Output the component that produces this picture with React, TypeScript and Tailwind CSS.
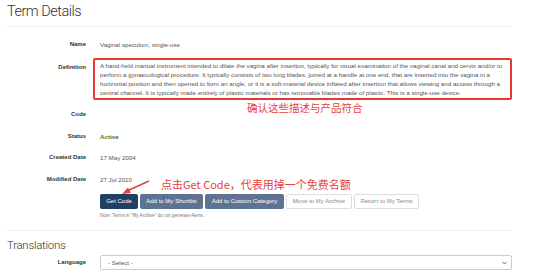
import type { ReactNode } from 'react';

interface RowProps {
  label: string;
  children?: ReactNode;
  className?: string;
}

function Row({ label, children, className = '' }: RowProps) {
  return (
    <div className={`flex items-center ${className}`}>
      <div className="w-[79px] shrink-0 text-right font-bold text-[6px] text-[#333]">{label}</div>
      <div className="ml-[14px] flex-1 text-[6.2px] text-[#555]">{children}</div>
    </div>
  );
}

const cjk = { fontFamily: '"Noto Sans CJK SC", "Liberation Sans", sans-serif' };
const heading = { fontFamily: 'Roboto, "Liberation Sans", sans-serif' };

export default function App() {
  return (
    <div
      className="relative w-[554px] h-[273px] overflow-hidden bg-white"
      style={{ fontFamily: '"Liberation Sans", Arial, sans-serif' }}
    >
      <div className="w-[512px] pl-[7px]">
        <div className="h-[27px] border-b border-[#eeeeee] pt-[2px]">
          <h1 className="text-[14.5px] leading-[20px] font-light tracking-[-0.5px] text-[#333]" style={heading}>
            Term Details
          </h1>
        </div>

        <Row label="Name" className="h-[21px] mt-[7px]">
          Vaginal speculum, single-use
        </Row>

        <div className="flex items-start mt-[3px]">
          <div className="w-[79px] shrink-0 text-right font-bold text-[6px] text-[#333] mt-[5px]">Definition</div>
          <div className="ml-[7px] flex-1 border-2 border-[#e53935] rounded-[2px] pl-[5px] pr-[4px] py-[1px] text-[6.2px] leading-[9px] text-[#555]">
            A hand-held manual instrument intended to dilate the vagina after insertion, typically for visual examination of the vaginal canal and cervix and/or to perform a gynaecological procedure. It typically consists of two long blades, joined at a handle at one end, that are inserted into the vagina in a horizontal position and then opened to form an angle, or it is a soft-material device inflated after insertion that allows viewing and access through a central channel. It is typically made entirely of plastic materials or has removable blades made of plastic. This is a single-use device.
          </div>
        </div>

        <Row label="Code" className="h-[21px] mt-[4px]" />
        <Row label="Status" className="h-[21px] mt-[1px]">
          <span className="text-[#3c763d] font-bold">Active</span>
        </Row>
        <Row label="Created Date" className="h-[21px]">
          17 May 2004
        </Row>
        <Row label="Modified Date" className="h-[21px] mt-[1px]">
          27 Jul 2010
        </Row>

        <div className="ml-[93px] mt-[4px] flex gap-[2px] text-[6px]">
          <button className="w-[38px] h-[15px] rounded-[2px] bg-[#213f63] text-white">Get Code</button>
          <button className="w-[63px] h-[15px] rounded-[2px] bg-[#5e7391] text-white">Add to My Shortlist</button>
          <button className="w-[79px] h-[15px] rounded-[2px] bg-[#5e7391] text-white">Add to Custom Category</button>
          <button className="w-[66px] h-[15px] rounded-[2px] bg-white border border-[#dddddd] text-[#888]">Move to My Archive</button>
          <button className="w-[65px] h-[15px] rounded-[2px] bg-white border border-[#dddddd] text-[#888]">Return to My Terms</button>
        </div>
        <div className="ml-[93px] mt-[3px] h-[7px] leading-[7px] text-[4.6px] text-[#777]">
          Note: Terms in "My Archive" do not generate Alerts.
        </div>

        <div className="mt-[11px] border-t border-[#eeeeee]" />

        <h2 className="mt-[7px] text-[11.5px] leading-[15px] font-light tracking-[-0.3px] text-[#333]" style={heading}>
          Translations
        </h2>

        <Row label="Language" className="mt-[2px] h-[15px]">
          <div className="flex h-[15px] items-center justify-between rounded-[2px] border border-[#cccccc] pl-[7px] pr-[4px] text-[#555]">
            <span>- Select -</span>
            <svg width="5" height="4" viewBox="0 0 5 4">
              <path d="M0.5 1 L2.5 3 L4.5 1" fill="none" stroke="#555" strokeWidth="0.9" />
            </svg>
          </div>
        </Row>
      </div>

      <div className="absolute left-[247px] top-[101px] text-[10.5px] leading-[14px] text-[#e8403a]" style={cjk}>
        确认这些描述与产品符合
      </div>
      <div className="absolute left-[161px] top-[177px] text-[11px] leading-[14px] text-[#e8403a]" style={cjk}>
        点击Get Code，代表用掉一个免费名额
      </div>
      <svg className="absolute left-0 top-0" width="554" height="273" viewBox="0 0 554 273">
        <line x1="149" y1="181" x2="127" y2="191" stroke="#e8403a" strokeWidth="1.6" />
        <polygon points="122,194 128,187.5 131,193" fill="#e8403a" />
      </svg>
    </div>
  );
}
